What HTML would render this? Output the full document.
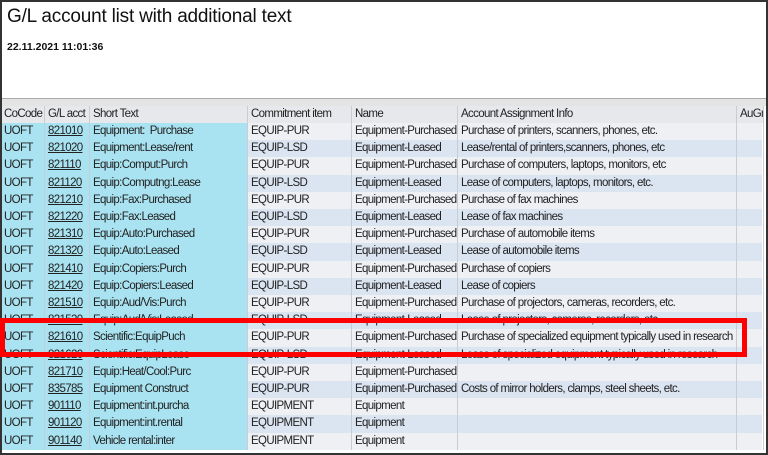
<!DOCTYPE html>
<html><head><style>
body{margin:0;width:768px;height:455px;overflow:hidden;background:#fff;font-family:"Liberation Sans",sans-serif;position:relative}
#frame{position:absolute;left:0;top:0;width:764px;height:451px;border:2px solid #333}
.t{position:absolute;left:7px;top:6px;font-size:19px;color:#111;letter-spacing:-0.2px}
.d{position:absolute;left:7px;top:41px;font-size:10.5px;font-weight:bold;color:#111}
.sep{position:absolute;left:2px;top:98px;width:764px;height:7px;background:#e4e4e4;border-top:1px solid #aaa}
.row{position:absolute;left:2px;width:760px;height:17.2px;font-size:11.5px;color:#222;letter-spacing:-0.65px}
.row div{position:absolute;top:0;height:100%;line-height:17px;white-space:nowrap;overflow:hidden;border-right:1px solid #c8ccd4;box-sizing:border-box;padding-left:3px}
.c1{left:0;width:43px}.c2{left:43px;width:45px}.c3{left:88px;width:158px}.c4{left:246px;width:104px}.c5{left:350px;width:106px}.c6{left:456px;width:279px}.c7{left:735px;width:27px}
.c1{padding-left:2px!important}
.c2 span{text-decoration:underline}
.hd{background:#e6e8ec;border-bottom:1px solid #bbb}
.a{background:#eef0f4}.b{background:#dbe4f1}
.row .c3{background:#a9e3f1}.row .c1,.row .c2{background:#a9e3f1}
.hd div{background:#e6e8ec!important}
.red{position:absolute;left:0;top:318px;width:737px;height:29px;border:5px solid #f00}
</style></head><body>
<div id="frame"></div>
<div class="t">G/L account list with additional text</div>
<div class="d">22.11.2021 11:01:36</div>
<div class="sep"></div>
<div class="row hd" style="top:106px"><div class="c1">CoCode</div><div class="c2">G/L acct</div><div class="c3">Short Text</div><div class="c4">Commitment item</div><div class="c5">Name</div><div class="c6">Account Assignment Info</div><div class="c7">AuGr</div></div>
<div class="row a" style="top:123px"><div class="c1">UOFT</div><div class="c2"><span>821010</span></div><div class="c3">Equipment:&nbsp; Purchase</div><div class="c4">EQUIP-PUR</div><div class="c5">Equipment-Purchased</div><div class="c6">Purchase of printers, scanners, phones, etc.</div><div class="c7"></div></div>
<div class="row b" style="top:140.2px"><div class="c1">UOFT</div><div class="c2"><span>821020</span></div><div class="c3">Equipment:Lease/rent</div><div class="c4">EQUIP-LSD</div><div class="c5">Equipment-Leased</div><div class="c6">Lease/rental of printers,scanners, phones, etc</div><div class="c7"></div></div>
<div class="row a" style="top:157.4px"><div class="c1">UOFT</div><div class="c2"><span>821110</span></div><div class="c3">Equip:Comput:Purch</div><div class="c4">EQUIP-PUR</div><div class="c5">Equipment-Purchased</div><div class="c6">Purchase of computers, laptops, monitors, etc</div><div class="c7"></div></div>
<div class="row b" style="top:174.6px"><div class="c1">UOFT</div><div class="c2"><span>821120</span></div><div class="c3">Equip:Computng:Lease</div><div class="c4">EQUIP-LSD</div><div class="c5">Equipment-Leased</div><div class="c6">Lease of computers, laptops, monitors, etc.</div><div class="c7"></div></div>
<div class="row a" style="top:191.8px"><div class="c1">UOFT</div><div class="c2"><span>821210</span></div><div class="c3">Equip:Fax:Purchased</div><div class="c4">EQUIP-PUR</div><div class="c5">Equipment-Purchased</div><div class="c6">Purchase of fax machines</div><div class="c7"></div></div>
<div class="row b" style="top:209px"><div class="c1">UOFT</div><div class="c2"><span>821220</span></div><div class="c3">Equip:Fax:Leased</div><div class="c4">EQUIP-LSD</div><div class="c5">Equipment-Leased</div><div class="c6">Lease of fax machines</div><div class="c7"></div></div>
<div class="row a" style="top:226.2px"><div class="c1">UOFT</div><div class="c2"><span>821310</span></div><div class="c3">Equip:Auto:Purchased</div><div class="c4">EQUIP-PUR</div><div class="c5">Equipment-Purchased</div><div class="c6">Purchase of automobile items</div><div class="c7"></div></div>
<div class="row b" style="top:243.4px"><div class="c1">UOFT</div><div class="c2"><span>821320</span></div><div class="c3">Equip:Auto:Leased</div><div class="c4">EQUIP-LSD</div><div class="c5">Equipment-Leased</div><div class="c6">Lease of automobile items</div><div class="c7"></div></div>
<div class="row a" style="top:260.6px"><div class="c1">UOFT</div><div class="c2"><span>821410</span></div><div class="c3">Equip:Copiers:Purch</div><div class="c4">EQUIP-PUR</div><div class="c5">Equipment-Purchased</div><div class="c6">Purchase of copiers</div><div class="c7"></div></div>
<div class="row b" style="top:277.8px"><div class="c1">UOFT</div><div class="c2"><span>821420</span></div><div class="c3">Equip:Copiers:Leased</div><div class="c4">EQUIP-LSD</div><div class="c5">Equipment-Leased</div><div class="c6">Lease of copiers</div><div class="c7"></div></div>
<div class="row a" style="top:295px"><div class="c1">UOFT</div><div class="c2"><span>821510</span></div><div class="c3">Equip:Aud/Vis:Purch</div><div class="c4">EQUIP-PUR</div><div class="c5">Equipment-Purchased</div><div class="c6">Purchase of projectors, cameras, recorders, etc.</div><div class="c7"></div></div>
<div class="row b" style="top:312.2px"><div class="c1">UOFT</div><div class="c2"><span>821520</span></div><div class="c3">Equip:Aud/Vis:Leased</div><div class="c4">EQUIP-LSD</div><div class="c5">Equipment-Leased</div><div class="c6">Lease of projectors, cameras, recorders, etc.</div><div class="c7"></div></div>
<div class="row a" style="top:329.4px"><div class="c1">UOFT</div><div class="c2"><span>821610</span></div><div class="c3">Scientific:EquipPuch</div><div class="c4">EQUIP-PUR</div><div class="c5">Equipment-Purchased</div><div class="c6">Purchase of specialized equipment typically used in research</div><div class="c7"></div></div>
<div class="row b" style="top:346.6px"><div class="c1">UOFT</div><div class="c2"><span>821620</span></div><div class="c3">Scientific:EquipLease</div><div class="c4">EQUIP-LSD</div><div class="c5">Equipment-Leased</div><div class="c6">Lease of specialized equipment typically used in research</div><div class="c7"></div></div>
<div class="row a" style="top:363.8px"><div class="c1">UOFT</div><div class="c2"><span>821710</span></div><div class="c3">Equip:Heat/Cool:Purc</div><div class="c4">EQUIP-PUR</div><div class="c5">Equipment-Purchased</div><div class="c6"></div><div class="c7"></div></div>
<div class="row b" style="top:381px"><div class="c1">UOFT</div><div class="c2"><span>835785</span></div><div class="c3">Equipment Construct</div><div class="c4">EQUIP-PUR</div><div class="c5">Equipment-Purchased</div><div class="c6">Costs of mirror holders, clamps, steel sheets, etc.</div><div class="c7"></div></div>
<div class="row a" style="top:398.2px"><div class="c1">UOFT</div><div class="c2"><span>901110</span></div><div class="c3">Equipment:int.purcha</div><div class="c4">EQUIPMENT</div><div class="c5">Equipment</div><div class="c6"></div><div class="c7"></div></div>
<div class="row b" style="top:415.4px"><div class="c1">UOFT</div><div class="c2"><span>901120</span></div><div class="c3">Equipment:int.rental</div><div class="c4">EQUIPMENT</div><div class="c5">Equipment</div><div class="c6"></div><div class="c7"></div></div>
<div class="row a" style="top:432.6px"><div class="c1">UOFT</div><div class="c2"><span>901140</span></div><div class="c3">Vehicle rental:inter</div><div class="c4">EQUIPMENT</div><div class="c5">Equipment</div><div class="c6"></div><div class="c7"></div></div>
<div class="red"></div>
</body></html>
